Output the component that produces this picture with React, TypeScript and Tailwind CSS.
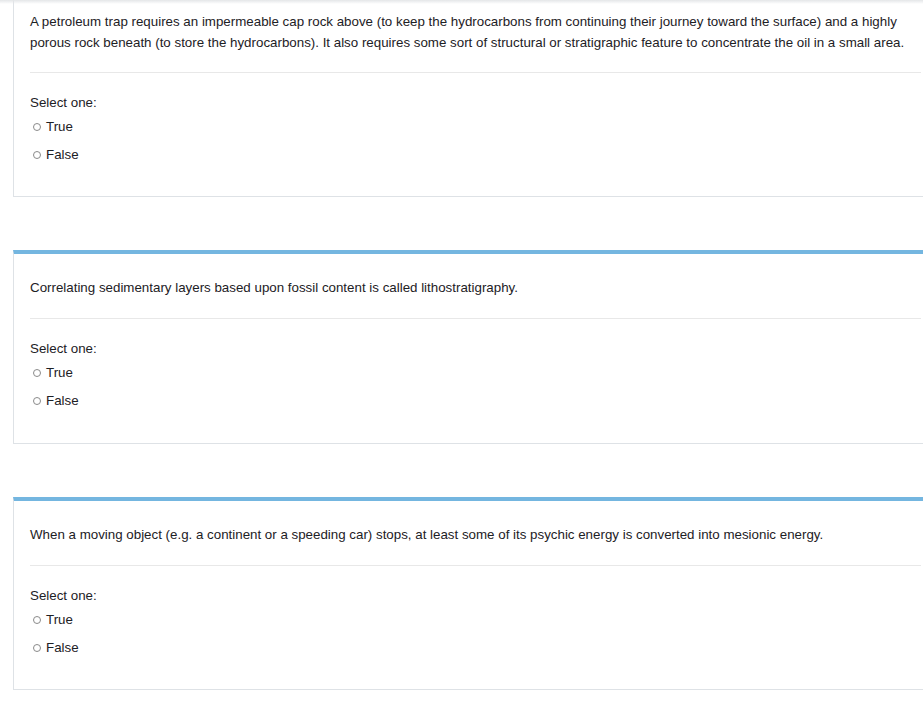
import React from 'react';

interface Question {
  text: string;
}

const QUESTIONS: Question[] = [
  {
    text: 'A petroleum trap requires an impermeable cap rock above (to keep the hydrocarbons from continuing their journey toward the surface) and a highly porous rock beneath (to store the hydrocarbons). It also requires some sort of structural or stratigraphic feature to concentrate the oil in a small area.',
  },
  {
    text: 'Correlating sedimentary layers based upon fossil content is called lithostratigraphy.',
  },
  {
    text: 'When a moving object (e.g. a continent or a speeding car) stops, at least some of its psychic energy is converted into mesionic energy.',
  },
];

function Option({ label }: { label: string }) {
  return (
    <label className="flex items-center h-[28px] cursor-pointer">
      <span className="ml-[3px] mr-[5px] w-[8px] h-[8px] rounded-full border border-[#8a8a8a] bg-white" />
      <span>{label}</span>
    </label>
  );
}

function QuestionCard({ q, idx }: { q: Question; idx: number }) {
  const first = idx === 0;
  return (
    <div
      className={
        'w-[924px] border-l border-b border-[#dee2e6] border-t-4 border-t-[#74b6e0] bg-white pl-[16px] pr-[16px] pt-[23px] ' +
        (first ? '-mt-[16px] pb-[27px]' : idx === 1 ? 'mt-[53px] pb-[28px]' : 'mt-[53px] pb-[27px]')
      }
    >
      <p className="leading-[21px]">{q.text}</p>
      <div className={(first ? 'mt-[19px]' : 'mt-[20px]') + ' h-px bg-[#e8e8e8]'} />
      <div className="mt-[19px]">
        <p className="leading-[21px]">Select one:</p>
        <Option label="True" />
        <Option label="False" />
      </div>
    </div>
  );
}

export default function App() {
  return (
    <div
      className="relative w-[923px] h-[703px] overflow-hidden bg-white text-[13.33px] text-[#1d2125] pl-[13px]"
      style={{ fontFamily: '"Liberation Sans", Arial, Helvetica, sans-serif' }}
    >
      {QUESTIONS.map((q, i) => (
        <QuestionCard key={i} q={q} idx={i} />
      ))}
      {/* faint top shade */}
      <div className="absolute top-0 left-0 right-0 h-[4px] bg-gradient-to-b from-[#e4e6e8] to-transparent" />
    </div>
  );
}
